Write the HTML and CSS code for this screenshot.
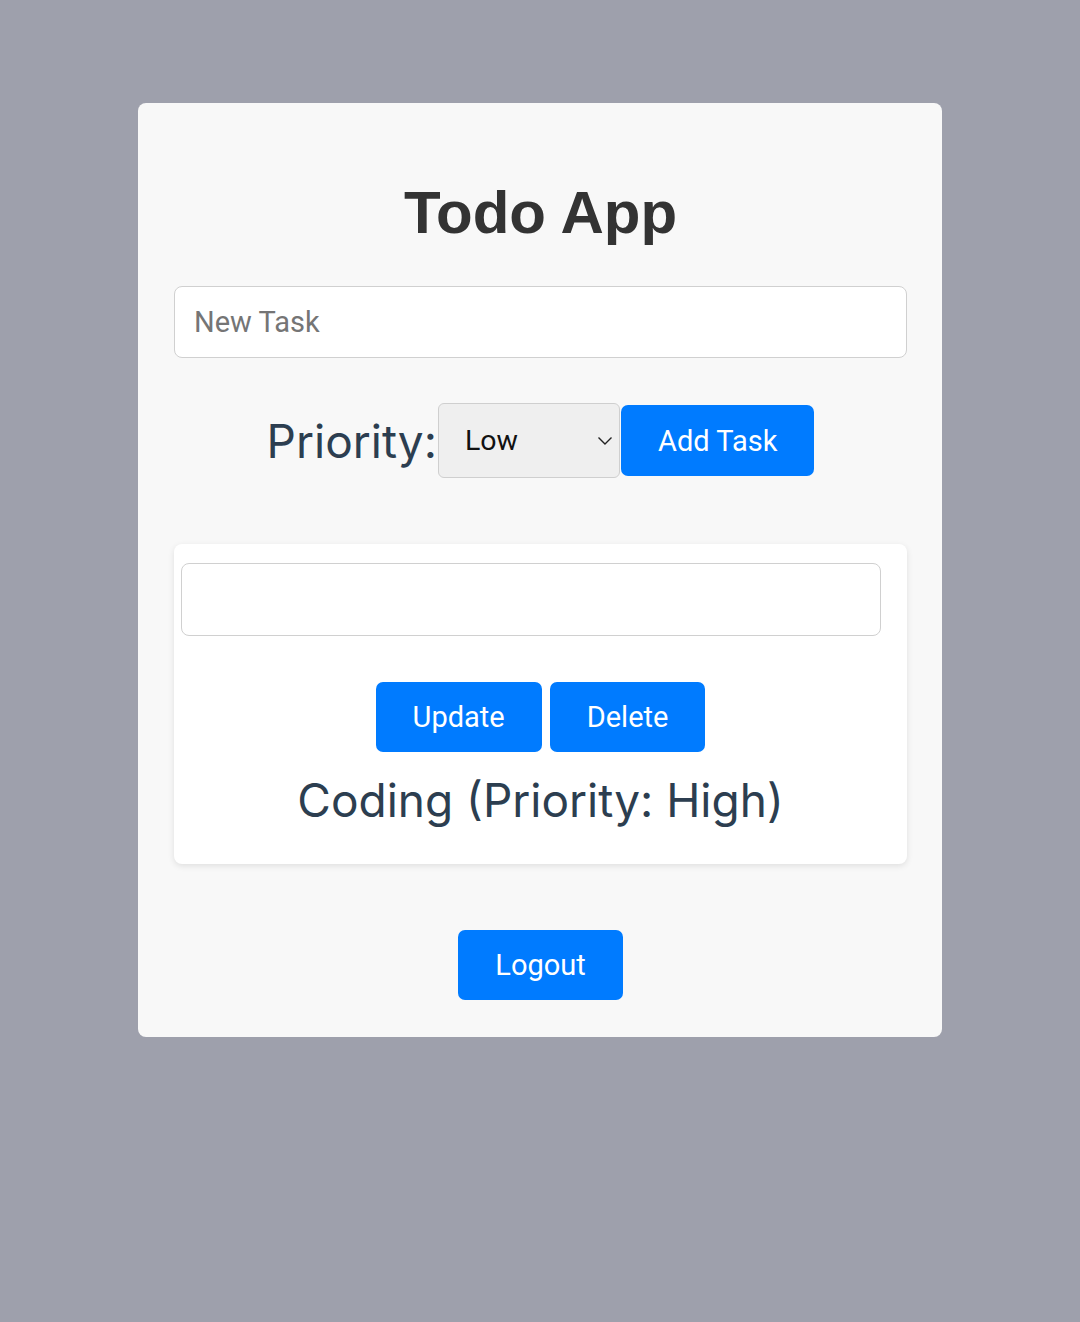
FILE: index.html
```html
<!DOCTYPE html>
<html lang="en">
<head>
<meta charset="utf-8">
<title>Todo App</title>
<link rel="stylesheet" href="styles.css">
</head>
<body>
<div class="app">
  <h1 class="title">Todo App</h1>
  <input class="text-input" type="text" placeholder="New Task">
  <div class="priority-row">
    <span class="priority-label">Priority:</span>
    <div class="select-wrap">
      <select class="priority-select">
        <option>Low</option>
        <option>Medium</option>
        <option>High</option>
      </select>
      <svg class="chevron" width="16" height="10" viewBox="0 0 16 10"><path d="M1.5 1.5 L8 8 L14.5 1.5" fill="none" stroke="#222" stroke-width="1.4"/></svg>
    </div>
    <button class="btn">Add Task</button>
  </div>
  <div class="task-card">
    <input class="text-input task-input" type="text">
    <div class="task-actions">
      <button class="btn">Update</button>
      <button class="btn">Delete</button>
    </div>
    <div class="task-text">Coding (Priority: High)</div>
  </div>
  <div class="logout-row">
    <button class="btn">Logout</button>
  </div>
</div>
</body>
</html>
```
FILE: styles.css
```css
html, body {
  margin: 0;
  padding: 0;
}
body {
  background: #9ea0ac;
  padding-top: 103px;
  min-height: 1322px;
  box-sizing: border-box;
}
.app {
  width: 804px;
  box-sizing: border-box;
  margin: 0 0 0 138px;
  background: #f8f8f8;
  border-radius: 8px;
  padding: 75px 35px 37px 36px;
}
.title {
  margin: 0;
  text-align: center;
  font-family: "Liberation Sans", Arial, sans-serif;
  font-weight: 700;
  font-size: 60px;
  line-height: 70px;
  color: #333333;
}
.text-input {
  display: block;
  width: 100%;
  box-sizing: border-box;
  height: 72px;
  margin: 38px 0 0 0;
  padding: 0 19px;
  border: 1.5px solid #d0d0d0;
  border-radius: 8px;
  background: #ffffff;
  font-family: Roboto, "Noto Sans", sans-serif;
  font-size: 29px;
  color: #222;
  outline: none;
}
.text-input::placeholder {
  color: #757575;
}
.priority-row {
  display: flex;
  justify-content: center;
  align-items: center;
  margin-top: 45px;
}
.priority-label {
  font-family: Inter, "Noto Sans", sans-serif;
  font-size: 46px;
  color: #2c3e50;
  margin-right: 1px;
}
.select-wrap {
  position: relative;
  width: 182px;
  height: 75px;
}
.priority-select {
  -webkit-appearance: none;
  appearance: none;
  width: 100%;
  height: 100%;
  box-sizing: border-box;
  background: #efefef;
  border: 1.5px solid #cfcfcf;
  border-radius: 6px;
  padding: 0 0 0 26px;
  font-family: Roboto, "Noto Sans", sans-serif;
  font-size: 28.5px;
  color: #111;
  outline: none;
}
.chevron {
  position: absolute;
  right: 7px;
  top: 33px;
  pointer-events: none;
}
.btn {
  height: 70px;
  padding: 0 37px;
  border: none;
  border-radius: 7px;
  background: #007bff;
  color: #ffffff;
  font-family: Roboto, "Noto Sans", sans-serif;
  font-size: 29px;
  cursor: pointer;
}
.priority-row .btn {
  height: 71px;
  margin-left: 1px;
}
.task-card {
  margin-top: 66px;
  background: #ffffff;
  border-radius: 8px;
  box-shadow: 0 2px 6px rgba(0, 0, 0, 0.1);
  padding: 19px 26px 36px 7px;
}
.task-card .task-input {
  margin-top: 0;
  height: 73px;
}
.task-actions {
  display: flex;
  justify-content: center;
  gap: 8px;
  margin-top: 46px;
  padding-left: 19px;
}
.task-text {
  margin-top: 20px;
  padding-left: 19px;
  text-align: center;
  font-family: Inter, "Noto Sans", sans-serif;
  font-size: 46px;
  line-height: 56px;
  color: #2c3e50;
}
.logout-row {
  display: flex;
  justify-content: center;
  margin-top: 66px;
}
```
